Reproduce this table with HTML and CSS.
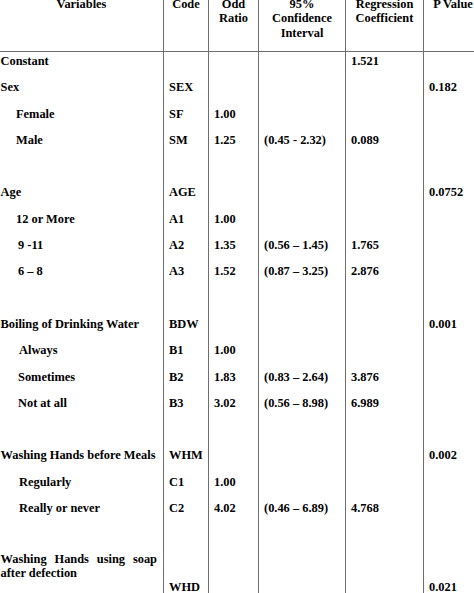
FILE: index.html
```html
<!DOCTYPE html>
<html lang="en">
<head>
<meta charset="utf-8">
<title>Logistic regression table</title>
<link rel="stylesheet" href="styles.css">
</head>
<body>
<table class="stats">
  <colgroup>
    <col class="c-var">
    <col class="c-code">
    <col class="c-odd">
    <col class="c-ci">
    <col class="c-reg">
    <col class="c-p">
  </colgroup>
  <thead>
    <tr>
      <th>Variables</th>
      <th>Code</th>
      <th>Odd<br>Ratio</th>
      <th>95%<br>Confidence<br>Interval</th>
      <th>Regression<br>Coefficient</th>
      <th>P Value</th>
    </tr>
  </thead>
  <tbody>
    <tr><td>Constant</td><td></td><td></td><td></td><td>1.521</td><td></td></tr>
    <tr><td>Sex</td><td>SEX</td><td></td><td></td><td></td><td>0.182</td></tr>
    <tr><td class="sub">Female</td><td>SF</td><td>1.00</td><td></td><td></td><td></td></tr>
    <tr><td class="sub">Male</td><td>SM</td><td>1.25</td><td>(0.45 - 2.32)</td><td>0.089</td><td></td></tr>
    <tr><td></td><td></td><td></td><td></td><td></td><td></td></tr>
    <tr><td>Age</td><td>AGE</td><td></td><td></td><td></td><td>0.0752</td></tr>
    <tr><td class="sub">12 or More</td><td>A1</td><td>1.00</td><td></td><td></td><td></td></tr>
    <tr><td class="sub2">9 -11</td><td>A2</td><td>1.35</td><td>(0.56 – 1.45)</td><td>1.765</td><td></td></tr>
    <tr><td class="sub2">6 – 8</td><td>A3</td><td>1.52</td><td>(0.87 – 3.25)</td><td>2.876</td><td></td></tr>
    <tr><td></td><td></td><td></td><td></td><td></td><td></td></tr>
    <tr><td>Boiling of Drinking Water</td><td>BDW</td><td></td><td></td><td></td><td>0.001</td></tr>
    <tr><td class="sub3">Always</td><td>B1</td><td>1.00</td><td></td><td></td><td></td></tr>
    <tr><td class="sub2">Sometimes</td><td>B2</td><td>1.83</td><td>(0.83 – 2.64)</td><td>3.876</td><td></td></tr>
    <tr><td class="sub2">Not at all</td><td>B3</td><td>3.02</td><td>(0.56 – 8.98)</td><td>6.989</td><td></td></tr>
    <tr><td></td><td></td><td></td><td></td><td></td><td></td></tr>
    <tr><td>Washing Hands before Meals</td><td>WHM</td><td></td><td></td><td></td><td>0.002</td></tr>
    <tr><td class="sub3">Regularly</td><td>C1</td><td>1.00</td><td></td><td></td><td></td></tr>
    <tr><td class="sub3">Really or never</td><td>C2</td><td>4.02</td><td>(0.46 – 6.89)</td><td>4.768</td><td></td></tr>
    <tr><td></td><td></td><td></td><td></td><td></td><td></td></tr>
    <tr><td class="wrap" rowspan="2">Washing Hands using soap after defection</td><td></td><td></td><td></td><td></td><td></td></tr>
    <tr><td>WHD</td><td></td><td></td><td></td><td>0.021</td></tr>
  </tbody>
</table>
</body>
</html>
```

FILE: styles.css
```css
html, body {
  margin: 0;
  padding: 0;
  background: #ffffff;
  overflow: hidden;
}

.stats {
  font-family: "Liberation Serif", "Times New Roman", serif;
  font-weight: bold;
  font-size: 12.4px;
  color: #000000;
  border-collapse: separate;
  border-spacing: 0;
  table-layout: fixed;
  width: 482px;
  margin-top: -3px;
}

.c-var { width: 163px; }
.c-code { width: 45px; }
.c-odd { width: 50px; }
.c-ci { width: 87px; }
.c-reg { width: 78px; }
.c-p { width: 59px; }

.stats th {
  height: 54px;
  padding: 0;
  line-height: 14.3px;
  text-align: center;
  vertical-align: top;
  font-weight: bold;
  border-bottom: 1px solid #6e6e6e;
}

.stats th + th,
.stats td + td {
  border-left: 1px solid #6e6e6e;
}

.stats tbody tr {
  height: 26.3px;
}

.stats td {
  padding: 2px 0 0 5px;
  line-height: 14px;
  vertical-align: top;
  white-space: nowrap;
}

.stats td:first-child {
  padding-left: 0.5px;
}

.stats td.sub { padding-left: 16px; }
.stats td.sub2 { padding-left: 18px; }
.stats td.sub3 { padding-left: 19px; }

.stats td.wrap {
  white-space: normal;
  text-align: justify;
  line-height: 13.3px;
  padding: 1.6px 6px 0 0.5px;
}

/* cell that follows the rowspan cell in the last row keeps its line */
.stats tbody tr:last-child td:first-child {
  border-left: 1px solid #6e6e6e;
  padding-left: 5px;
}
```
